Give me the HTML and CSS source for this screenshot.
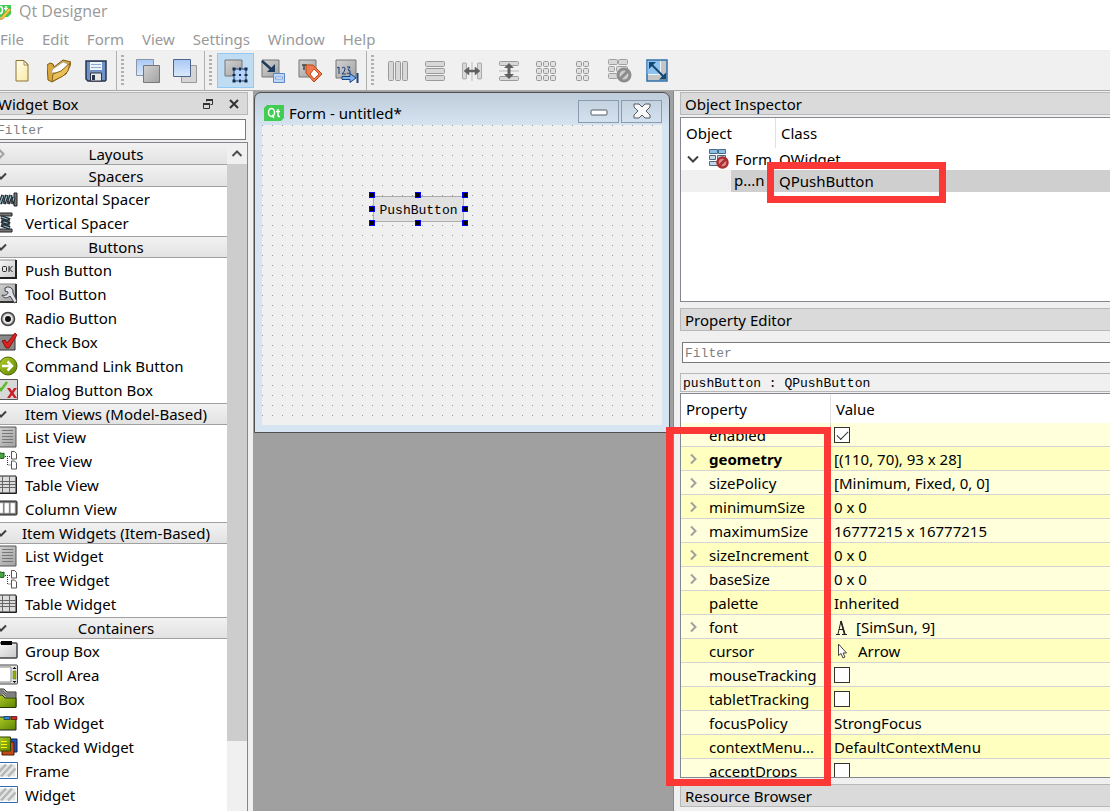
FILE: index.html
```html
<!DOCTYPE html>
<html lang="en">
<head>
<meta charset="utf-8">
<title>Qt Designer</title>
<link rel="stylesheet" href="styles.css">
</head>
<body>
<svg class="defs" aria-hidden="true">
  <defs>
    <linearGradient id="gGray" x1="0" y1="0" x2="1" y2="1"><stop offset="0" stop-color="#d2d2d2"/><stop offset="1" stop-color="#a2a2a2"/></linearGradient>
    <linearGradient id="gLight" x1="0" y1="0" x2="1" y2="1"><stop offset="0" stop-color="#fafafa"/><stop offset="1" stop-color="#c8c8c8"/></linearGradient>
    <linearGradient id="gBlue" x1="0" y1="0" x2="0" y2="1"><stop offset="0" stop-color="#a9c8f5"/><stop offset="1" stop-color="#dbeafc"/></linearGradient>
    <linearGradient id="gPage" x1="0" y1="0" x2="1" y2="1"><stop offset="0" stop-color="#fffef0"/><stop offset="1" stop-color="#fbe9a0"/></linearGradient>
    <linearGradient id="gGreen" x1="0" y1="0" x2="1" y2="1"><stop offset="0" stop-color="#b4cf2a"/><stop offset="1" stop-color="#5d8400"/></linearGradient>
    <symbol id="down" viewBox="0 0 12 12"><path d="M1 3.500 6 8.500 11 3.500" fill="none" stroke="#404040" stroke-width="2"/></symbol>
    <symbol id="right" viewBox="0 0 12 12"><path d="M4 1.500 8.500 6 4 10.500" fill="none" stroke="#a0a0a0" stroke-width="2"/></symbol>
    <symbol id="hspacer" viewBox="0 0 22 22"><path d="M0 5h3v13H0zM18 5h3v13h-3z" fill="#777" stroke="#222"/><path d="M4 16 7 7M8 16l3-9M12 16l3-9M16 16l2-7" stroke="#1c2a34" stroke-width="3.500"/><path d="M4 15.500 7 7.500M8 15.500l3-8M12 15.500l3-8M16 15.500l2-6" stroke="#9fc0d4" stroke-width="1.200"/><path d="M7 7l2 9M11 7l2 9M15 7l2 9" stroke="#333"/></symbol>
    <symbol id="vspacer" viewBox="0 0 22 22"><path d="M2 1h14v3H2zM2 17h14v3H2z" fill="#777" stroke="#222"/><path d="M5 5l9 3M5 9l9 3M5 13l9 3" stroke="#1c2a34" stroke-width="3.500"/><path d="M5.500 5l8 3M5.500 9l8 3M5.500 13l8 3" stroke="#9fc0d4" stroke-width="1.200"/><path d="M14 7l-9 3M14 11l-9 3" stroke="#333"/></symbol>
    <symbol id="pushb" viewBox="0 0 22 22"><path d="M1 1h19v18H1z" fill="url(#gLight)" stroke="#888"/><path d="M20 1v18H1" fill="none" stroke="#222" stroke-width="2"/><rect x="6.500" y="7.500" width="4" height="5" rx="1" fill="none" stroke="#222"/><path d="M13 7v6M16.500 7 13.500 10l3 3" fill="none" stroke="#222"/></symbol>
    <symbol id="toolb" viewBox="0 0 22 22"><path d="M1 1h19v18H1z" fill="url(#gGray)" stroke="#888"/><path d="M20 1v18H1" fill="none" stroke="#333" stroke-width="2"/><path d="M9 5a5 5 0 0 1 8 5l4 8-2.500 2-4.500-7c-3 3-7 2-8-1 3 1 6 0 6-3l-3-1z" fill="#dfe2e8" stroke="#444"/></symbol>
    <symbol id="radio" viewBox="0 0 22 22"><circle cx="12" cy="12" r="6.500" fill="url(#gGray)" stroke="#444" stroke-width="1.500"/><circle cx="12" cy="12" r="4.500" fill="#eee"/><circle cx="12" cy="12" r="3" fill="#111"/></symbol>
    <symbol id="check" viewBox="0 0 22 22"><path d="M2 4h17v15H2z" fill="#8b8b8b" stroke="#333"/><path d="M6 10l3-1 2 3 8-10 2 2-8 13h-3z" fill="#df2020" stroke="#7a0808" stroke-width=".8"/></symbol>
    <symbol id="clink" viewBox="0 0 22 22"><circle cx="12" cy="11" r="9" fill="url(#gGreen)" stroke="#4a6800"/><path d="M6 11h10M11.500 6.500 16 11l-4.500 4.500" fill="none" stroke="#fff" stroke-width="2.500"/></symbol>
    <symbol id="dlgb" viewBox="0 0 22 22"><path d="M0 .500h21.500v20H0z" fill="#d8d8d8" stroke="#555"/><path d="M2 8l3 3 6-8" fill="none" stroke="#5dbb2b" stroke-width="2.500"/><path d="M11 9h3l2 3 2-3h3l-3.500 5 3.500 5h-3l-2-3-2 3h-3l3.500-5z" fill="#c81e28"/></symbol>
    <symbol id="list" viewBox="0 0 22 22"><path d="M1 1h19v20H1z" fill="url(#gGray)" stroke="#555"/><path d="M6 4.500h11M6 7.500h11M6 10.500h11M6 13.500h11M6 16.500h11" stroke="#777"/><path d="M3 3v16" stroke="#888" stroke-width="2"/></symbol>
    <symbol id="tree" viewBox="0 0 22 22"><path d="M0 4c3-4 5 1 8-1v5c-3 2-5-2-8 1z" fill="#49a83f" stroke="#14501a"/><path d="M9 6.500h5M11.500 8v7h4" fill="none" stroke="#333" stroke-dasharray="1 1"/><path d="M15.500 1.500h3l2 2V9h-5zM15.500 11h3l2 2v6h-5z" fill="#fff" stroke="#555"/></symbol>
    <symbol id="table" viewBox="0 0 22 22"><path d="M0 2h20v17H0z" fill="#dcdcdc" stroke="#222"/><path d="M1 7.500h19M1 10.500h19M1 13.500h19M6.500 2v17M13.500 2v17" stroke="#666"/><path d="M20.500 3v16.500H1" fill="none" stroke="#222"/></symbol>
    <symbol id="column" viewBox="0 0 22 22"><rect x="0" y="3" width="21" height="14" rx="1" fill="#777" stroke="#222"/><path d="M2.500 5h4.500v10H2.500zM8.500 5h4.500v10H8.500zM14.500 5h4.500v10h-4.500z" fill="#fff" stroke="#bbb" stroke-width=".5"/></symbol>
    <symbol id="group" viewBox="0 0 22 22"><rect x="0" y="3" width="21" height="15" rx="1" fill="url(#gLight)" stroke="#444" stroke-width="1.500"/><path d="M5 1h11v4H5z" fill="#000"/></symbol>
    <symbol id="scroll" viewBox="0 0 22 22"><rect x="0" y="1" width="21.500" height="19" rx="1" fill="#e8e8e8" stroke="#444"/><path d="M3 3h12v15H3z" fill="#fff" stroke="#888"/><path d="M17 7h3v8h-3z" fill="#91b40a" stroke="#4c6a00" stroke-width=".5"/><path d="M16.500 5l2-2 2 2zM16.500 17l2 2 2-2z"/></symbol>
    <symbol id="toolbox" viewBox="0 0 22 22"><path d="M0 1h8l3 3h9v15H0z" fill="#aaa" stroke="#333"/><path d="M0 5h7l3 3h10M0 3h7l3 3h10" fill="none" stroke="#555"/><path d="M0 7h6l3 3h11v9.500H0z" fill="url(#gGreen)" stroke="#263700"/></symbol>
    <symbol id="tab" viewBox="0 0 22 22"><path d="M0 5h20v13H0z" fill="url(#gGreen)" stroke="#222"/><path d="M8 4.500h6v3H8z" fill="#2e86e0" stroke="#123" stroke-width=".6"/><path d="M15 4.500h6v3h-6z" fill="#d32424" stroke="#311" stroke-width=".6"/></symbol>
    <symbol id="stack" viewBox="0 0 22 22"><path d="M12 3h9v13h-9z" fill="#1d55c5" stroke="#0a1f50"/><path d="M6 6h12v13H6z" fill="#c04a1c" stroke="#501800"/><path d="M1 1h13.500v14H1z" fill="url(#gGreen)" stroke="#304500"/><path d="M5 5.500h6M5 8.500h6M5 11.500h6" stroke="#ff0"/></symbol>
    <symbol id="frame" viewBox="0 0 22 22"><path d="M0 2.500h21.500v16H0z" fill="#fff" stroke="#2d6cb5"/><path d="M0 4.500h19.500v12H0z" fill="#e4e4e4"/><path d="M2 13l8-8.500M5 16.500 16 4.500M12 16.500l7.500-8" stroke="#b4b6b6" stroke-width="2.500"/></symbol>
    <symbol id="bar" viewBox="0 0 6 20"><rect x=".5" y=".5" width="5" height="19" rx="1" fill="#d8d8d8" stroke="#9a9a9a"/></symbol>
    <symbol id="cell" viewBox="0 0 6 6"><rect x=".5" y=".5" width="5" height="5" rx="1" fill="#e2e2e2" stroke="#989898"/></symbol>
  </defs>
</svg>
<div class="app">
  <header class="titlebar">
    <svg class="logo" viewBox="0 0 20 20"><path d="M3 4h16v9l-3 3H0V6z" fill="#41cd52"/><ellipse cx="8" cy="9" rx="2.500" ry="3.500" fill="none" stroke="#fff" stroke-width="1.500"/><path d="M14 5v5M12 7.500h4" stroke="#fff" stroke-width="1.500"/><path d="M9 16 17 7l2 2-8 9-3 .5z" fill="#f5c842" stroke="#a77d28" stroke-width=".6"/></svg>
    <span>Qt Designer</span>
  </header>
  <nav class="menubar">
    <button>File</button><button>Edit</button><button>Form</button><button>View</button><button>Settings</button><button>Window</button><button>Help</button>
  </nav>
  <div class="toolbar">
    <div class="tools first">
      <button aria-label="New"><svg viewBox="0 0 24 24"><path d="M6 1.500h8l4 4V22H6z" fill="url(#gPage)" stroke="#8c7430"/><path d="M14 2v4h4z" fill="#fff" stroke="#8c7430" stroke-width=".8"/></svg></button>
      <button aria-label="Open"><svg viewBox="0 0 24 24"><path d="M0 6l3-2 3 1 1 3 9-7 8 2-1 4-4 8L5 23 1 21z" fill="#d9a93e" stroke="#7d5a14"/><path d="M4 14 6 10 16 3l5 2-5 8z" fill="#fff" stroke="#999" stroke-width=".7"/><path d="M5 22.500 6 15l8-3 9-8-2 8-5 5z" fill="#e9bf5b" stroke="#8c661a"/></svg></button>
      <button aria-label="Save"><svg viewBox="0 0 24 24"><path d="M2 2h20v19l-1 1H4l-2-2z" fill="#6f93c4" stroke="#26364f" stroke-width="1.500"/><path d="M6 3h12v8H6z" fill="#eef3fa"/><path d="M7 5.500h10M7 8.500h10" stroke="#8aaad4"/><path d="M6.500 14h11v8h-11z" fill="#e8e8e8" stroke="#334"/><path d="M8 16h3v5H8z" fill="#27344a"/></svg></button>
    </div>
    <div class="tools">
      <i class="grip"></i>
      <button aria-label="Send to back"><svg viewBox="0 0 24 24"><path d="M.5.500h17v16H.5z" fill="url(#gBlue)" stroke="#8896aa"/><path d="M7.500 6.500h16v17h-16z" fill="url(#gGray)" stroke="#777"/></svg></button>
      <button aria-label="Bring to front"><svg viewBox="0 0 24 24"><path d="M8.500 6.500h15v17h-15z" fill="#d5d5d5" stroke="#999"/><path d="M.5.500h17v17H.5z" fill="url(#gBlue)" stroke="#4f668c"/></svg></button>
    </div>
    <div class="tools">
      <i class="grip"></i>
      <button class="active" aria-label="Edit widgets"><svg viewBox="0 0 24 24"><path d="M1 1h17v16H1z" fill="url(#gGray)" stroke="#777"/><path d="M10 10h12v12H10z" fill="#b5d3fa" stroke="#223a60"/><path d="M8.500 8.500h3v3h-3zM15 8.500h2v3h-2zM20.500 8.500h3v3h-3zM8.500 15h3v2h-3zM20.500 15h3v2h-3zM8.500 20.500h3v3h-3zM15 20.500h2v3h-2zM20.500 20.500h3v3h-3zM15 15h2v2h-2z" fill="#112a50"/></svg></button>
      <button aria-label="Edit signals and slots"><svg viewBox="0 0 24 24"><path d="M1 1h17v17H1z" fill="url(#gGray)" stroke="#777"/><path d="M1 2l9 8" stroke="#1d3b5c" stroke-width="2.500"/><path d="M14 13V5l-8 8z" fill="#1d3b5c"/><path d="M12.500 14.500h11v9h-11z" fill="#bdd8fb" stroke="#5d87c4"/><path d="M14.500 18h7v2h-7z" fill="#fff" stroke="#5d87c4" stroke-width=".7"/></svg></button>
      <button aria-label="Edit buddies"><svg viewBox="0 0 24 24"><path d="M1 1h17v17H1z" fill="url(#gGray)" stroke="#777"/><path d="M4 6h5M6 6v5" stroke="#444" stroke-width="1.500"/><path d="M8 6h7l9 9-8 8-8-9z" fill="#ef7a4d" stroke="#b84617"/><path d="M16 10l5 5-5 5-4-5z" fill="#fff" stroke="#c6501e"/></svg></button>
      <button aria-label="Edit tab order"><svg viewBox="0 0 24 24"><path d="M1 1h20v18H1z" fill="url(#gGray)" stroke="#777"/><path d="M2 9l2-1v7M7 9q3-2 3 1 0 2-3 5h4M12 8h3l-2 3q3 0 2 3-1 1-3 0" fill="none" stroke="#163b78"/><path d="M7 17.500h8v-3l6 4.500-6 4.500v-3H7z" fill="#80b2f2" stroke="#19457e"/><path d="M22.500 14v10" stroke="#19457e" stroke-width="2"/></svg></button>
    </div>
    <div class="tools last">
      <i class="grip"></i>
      <button aria-label="Lay out horizontally"><svg viewBox="0 0 24 24"><use href="#bar" x="2" y="2" width="6" height="20"/><use href="#bar" x="9" y="2" width="6" height="20"/><use href="#bar" x="16" y="2" width="6" height="20"/></svg></button>
      <button aria-label="Lay out vertically"><svg viewBox="0 0 24 24"><g fill="#d8d8d8" stroke="#9a9a9a"><rect x="2.500" y="2.500" width="19" height="5" rx="1"/><rect x="2.500" y="9.500" width="19" height="5" rx="1"/><rect x="2.500" y="16.500" width="19" height="5" rx="1"/></g></svg></button>
      <button aria-label="Horizontal splitter"><svg viewBox="0 0 24 24"><use href="#bar" x="2" y="2" width="5" height="20"/><use href="#bar" x="17" y="2" width="5" height="20"/><path d="M12 3v19" stroke="#bbb"/><path d="M4 12l5-4v3h6V8l5 4-5 4v-3H9v3z" fill="#606060" stroke="#606060" stroke-width=".5"/></svg></button>
      <button aria-label="Vertical splitter"><svg viewBox="0 0 24 24"><g fill="#d8d8d8" stroke="#9a9a9a"><rect x="2.500" y="2.500" width="19" height="4" rx="1"/><rect x="2.500" y="17.500" width="19" height="4" rx="1"/></g><path d="M2 12h20" stroke="#bbb"/><path d="M12 4l5 5h-3.500v6H17l-5 5-5-5h3.500V9H7z" fill="#606060"/></svg></button>
      <button aria-label="Lay out in a grid"><svg viewBox="0 0 24 24"><use href="#cell" x="2" y="2" width="6" height="6"/><use href="#cell" x="9" y="2" width="6" height="6"/><use href="#cell" x="16" y="2" width="6" height="6"/><use href="#cell" x="2" y="9" width="6" height="6"/><use href="#cell" x="9" y="9" width="6" height="6"/><use href="#cell" x="16" y="9" width="6" height="6"/><use href="#cell" x="2" y="16" width="6" height="6"/><use href="#cell" x="9" y="16" width="6" height="6"/><use href="#cell" x="16" y="16" width="6" height="6"/></svg></button>
      <button aria-label="Lay out in a form"><svg viewBox="0 0 24 24"><use href="#cell" x="5" y="2" width="6" height="6"/><use href="#cell" x="12" y="2" width="6" height="6"/><use href="#cell" x="5" y="9" width="6" height="6"/><use href="#cell" x="12" y="9" width="6" height="6"/><use href="#cell" x="5" y="16" width="6" height="6"/><use href="#cell" x="12" y="16" width="6" height="6"/></svg></button>
      <button aria-label="Break layout"><svg viewBox="0 0 24 24"><g fill="#d8d8d8" stroke="#a0a0a0"><rect x=".5" y=".5" width="9" height="5" rx="1"/><rect x="10.500" y=".5" width="9" height="5" rx="1"/><rect x=".5" y="7.500" width="6" height="5" rx="1"/><rect x="8.500" y="7.500" width="11" height="5" rx="1"/><rect x=".5" y="14.500" width="9" height="5" rx="1"/></g><circle cx="16" cy="16" r="6" fill="#ccc" stroke="#8c8c8c" stroke-width="3"/><path d="M12 20l8-8" stroke="#8c8c8c" stroke-width="3"/></svg></button>
      <button aria-label="Adjust size"><svg viewBox="0 0 24 24"><path d="M2 1h20v21H2z" fill="#c6c6c6" stroke="#2f72ad" stroke-width="1.500"/><path d="M2.500 2h13v13h-13z" fill="#8fc2f0"/><path d="M15.500 2v13.500H3" fill="none" stroke="#eef6fd"/><path d="M6 5l13 13" stroke="#114a70" stroke-width="2"/><path d="M4 3h7l-7 7zM21 20.500v-7l-7 7z" fill="#114a70"/></svg></button>
    </div>
  </div>
  <main class="workspace">
    <aside class="widgetbox">
      <div class="dock-title"><h2>Widget Box</h2>
        <button aria-label="Float"><svg viewBox="0 0 12 12"><path d="M4.500 3.500v-2h6v5h-2M1.500 5.500h6v5h-6z" fill="none" stroke="#333"/><path d="M4 2h7M1 6h7" stroke="#333" stroke-width="2"/></svg></button>
        <button aria-label="Close"><svg viewBox="0 0 12 12"><path d="M2 2l8 8M10 2l-8 8" stroke="#333" stroke-width="2"/></svg></button>
      </div>
      <input class="filter" type="text" placeholder="Filter" aria-label="Filter widgets">
      <div class="listframe">
        <div class="categories">
          <section><button class="cat"><svg><use href="#right"/></svg><span>Layouts</span></button></section>
          <section><button class="cat"><svg><use href="#down"/></svg><span>Spacers</span></button>
            <ul><li><svg><use href="#hspacer"/></svg>Horizontal Spacer</li><li><svg><use href="#vspacer"/></svg>Vertical Spacer</li></ul></section>
          <section><button class="cat ruled"><svg><use href="#down"/></svg><span>Buttons</span></button>
            <ul><li><svg><use href="#pushb"/></svg>Push Button</li><li><svg><use href="#toolb"/></svg>Tool Button</li><li><svg><use href="#radio"/></svg>Radio Button</li><li><svg><use href="#check"/></svg>Check Box</li><li><svg><use href="#clink"/></svg>Command Link Button</li><li><svg><use href="#dlgb"/></svg>Dialog Button Box</li></ul></section>
          <section><button class="cat ruled"><svg><use href="#down"/></svg><span>Item Views (Model-Based)</span></button>
            <ul><li><svg><use href="#list"/></svg>List View</li><li><svg><use href="#tree"/></svg>Tree View</li><li><svg><use href="#table"/></svg>Table View</li><li><svg><use href="#column"/></svg>Column View</li></ul></section>
          <section><button class="cat ruled"><svg><use href="#down"/></svg><span>Item Widgets (Item-Based)</span></button>
            <ul><li><svg><use href="#list"/></svg>List Widget</li><li><svg><use href="#tree"/></svg>Tree Widget</li><li><svg><use href="#table"/></svg>Table Widget</li></ul></section>
          <section><button class="cat ruled"><svg><use href="#down"/></svg><span>Containers</span></button>
            <ul><li><svg><use href="#group"/></svg>Group Box</li><li><svg><use href="#scroll"/></svg>Scroll Area</li><li><svg><use href="#toolbox"/></svg>Tool Box</li><li><svg><use href="#tab"/></svg>Tab Widget</li><li><svg><use href="#stack"/></svg>Stacked Widget</li><li><svg><use href="#frame"/></svg>Frame</li><li><svg><use href="#frame"/></svg>Widget</li></ul></section>
        </div>
        <div class="scrollbar"><button aria-label="Scroll up"><svg viewBox="0 0 12 12"><path d="M1.500 8 6 3.500 10.500 8" fill="none" stroke="#505050" stroke-width="2"/></svg></button><div class="thumb"></div></div>
      </div>
    </aside>
    <section class="mdi">
      <div class="subwindow">
        <div class="subtitle">
          <svg class="qt" viewBox="0 0 20 16"><path d="M3 0h17v13l-3 3H0V3z" fill="#41cd52"/><ellipse cx="7.500" cy="7.500" rx="3" ry="4" fill="none" stroke="#fff" stroke-width="1.500"/><path d="M8 10l2 3M14 4v6q0 2 2 1.500M12 6.500h4" fill="none" stroke="#fff" stroke-width="1.500"/></svg>
          <span>Form - untitled*</span>
          <button aria-label="Minimize"><svg viewBox="0 0 18 18"><rect x="1" y="8" width="16" height="5" rx="1" fill="#fff" stroke="#555b66"/></svg></button>
          <button aria-label="Close form"><svg viewBox="0 0 18 18"><path d="M1 2h5l3 3 3-3h5v3l-4 4 4 4v3h-5l-3-3-3 3H1v-3l4-4-4-4z" fill="#f8f8f8" stroke="#555b66"/></svg></button>
        </div>
        <div class="canvas">
          <div class="selected">
            <button>PushButton</button>
            <i class="h tl"></i><i class="h tc"></i><i class="h tr"></i><i class="h ml"></i><i class="h mr"></i><i class="h bl"></i><i class="h bc"></i><i class="h br"></i>
          </div>
        </div>
      </div>
    </section>
    <aside class="docks">
      <section class="inspector">
        <div class="dock-title"><h2>Object Inspector</h2></div>
        <div class="treeframe">
          <table class="objects">
            <colgroup><col class="c-object"><col></colgroup>
            <thead><tr><th>Object</th><th>Class</th></tr></thead>
            <tbody>
              <tr><td><div class="node"><svg class="chev"><use href="#down"/></svg><svg class="formicon" viewBox="0 0 20 20"><g fill="#8cbfe6" stroke="#4a6a8a"><path d="M.5.500h8v4h-8zM9.500.500h7v4h-7z"/><path d="M.5 6.500h6v4h-6zM8.500 6.500h8v4h-8zM.5 12.500h8v4h-8z" fill="#c9d6e2"/></g><circle cx="13.500" cy="13.500" r="5" fill="#d98c8c" stroke="#ad2f2f" stroke-width="2.500"/><path d="M10 17l7-7" stroke="#ad2f2f" stroke-width="2.500"/></svg>Form</div></td><td>QWidget</td></tr>
              <tr class="current"><td><div class="child">p...n</div></td><td>QPushButton</td></tr>
            </tbody>
          </table>
        </div>
        <div class="mark mark-class"></div>
      </section>
      <section class="editor">
        <div class="dock-title"><h2>Property Editor</h2></div>
        <input class="filter" type="text" placeholder="Filter" aria-label="Filter properties">
        <div class="objname">pushButton : QPushButton</div>
        <div class="propframe">
          <table class="props">
            <colgroup><col class="c-prop"><col></colgroup>
            <thead><tr><th>Property</th><th>Value</th></tr></thead>
            <tbody>
              <tr><td><div class="name"><i></i><label for="enabled">enabled</label></div></td><td><input id="enabled" type="checkbox" checked></td></tr>
              <tr><td><div class="name"><svg><use href="#right"/></svg><b>geometry</b></div></td><td>[(110, 70), 93 x 28]</td></tr>
              <tr><td><div class="name"><svg><use href="#right"/></svg>sizePolicy</div></td><td>[Minimum, Fixed, 0, 0]</td></tr>
              <tr><td><div class="name"><svg><use href="#right"/></svg>minimumSize</div></td><td>0 x 0</td></tr>
              <tr><td><div class="name"><svg><use href="#right"/></svg>maximumSize</div></td><td>16777215 x 16777215</td></tr>
              <tr><td><div class="name"><svg><use href="#right"/></svg>sizeIncrement</div></td><td>0 x 0</td></tr>
              <tr><td><div class="name"><svg><use href="#right"/></svg>baseSize</div></td><td>0 x 0</td></tr>
              <tr><td><div class="name"><i></i>palette</div></td><td>Inherited</td></tr>
              <tr><td><div class="name"><svg><use href="#right"/></svg>font</div></td><td><div class="val"><svg viewBox="0 0 14 18"><path d="M2 16.500h4M8 16.500h5M4 16 7 3l4 13M5 11.500h4" fill="none" stroke="#222"/><path d="M7 3l3.500 13" stroke="#222" stroke-width="1.500"/></svg>[SimSun, 9]</div></td></tr>
              <tr><td><div class="name"><i></i>cursor</div></td><td><div class="val wide"><svg viewBox="0 0 14 18"><path d="M4.500 2v11.500l2.500-2L9 16l2-1-2-4h3.500z" fill="#fff" stroke="#444"/></svg>Arrow</div></td></tr>
              <tr><td><div class="name"><i></i><label for="mouse">mouseTracking</label></div></td><td><input id="mouse" type="checkbox"></td></tr>
              <tr><td><div class="name"><i></i><label for="tablet">tabletTracking</label></div></td><td><input id="tablet" type="checkbox"></td></tr>
              <tr><td><div class="name"><i></i>focusPolicy</div></td><td>StrongFocus</td></tr>
              <tr><td><div class="name"><i></i>contextMenu...</div></td><td>DefaultContextMenu</td></tr>
              <tr><td><div class="name"><i></i><label for="drops">acceptDrops</label></div></td><td><input id="drops" type="checkbox"></td></tr>
            </tbody>
          </table>
        </div>
        <div class="mark mark-props"></div>
      </section>
      <div class="dock-title"><h2>Resource Browser</h2></div>
    </aside>
  </main>
</div>
</body>
</html>
```
FILE: styles.css
```css
* { box-sizing: border-box; }
body { margin: 0; overflow: hidden; background: #fff; color: #000; font: 15px/20px "Noto Sans", "Open Sans", sans-serif; }
button { margin: 0; padding: 0; border: 0; background: none; font: inherit; color: inherit; }
h2 { margin: 0; font: inherit; }
ul { margin: 0; padding: 0; list-style: none; }
svg { display: block; flex: none; }
.defs { position: absolute; width: 0; height: 0; }

/* The window runs 16px past the left edge of the screen. */
.app { display: flex; flex-direction: column; height: 100vh; margin-left: -16px; }

.titlebar { display: flex; align-items: center; gap: 7px; height: 21px; padding-left: 8px; color: #999; }
.logo { width: 20px; height: 20px; }
.menubar { display: flex; align-items: center; gap: 16px; height: 30px; padding: 6px 0 0 16px; border-bottom: 1px solid #ececec; color: #999; }
.titlebar, .menubar { font-family: "Open Sans", "Noto Sans", sans-serif; }
.titlebar { font-size: 16px; }
.menubar { gap: 18px; font-size: 15px; font-family: "Noto Sans", "Open Sans", sans-serif; }

.toolbar { display: flex; height: 40px; background: #f0f0f0; border-bottom: 1px solid #a8a8a8; }
.tools { display: flex; align-items: center; padding: 0 1px 0 4px; border-right: 1px solid #b0b0b0; }
.tools.first { padding: 0 2px 0 19px; }
.tools.last { border-right: 0; }
.tools button { display: grid; place-items: center; width: 37px; height: 35px; }
.tools button.active { background: #c0dcf3; border: 1px solid #90c8f6; }
.tools svg { width: 24px; height: 24px; }
.grip { width: 3px; height: 32px; margin-right: 5px; background: repeating-linear-gradient(#b0b0b0 0 2px, #f0f0f0 2px 4px); }

.workspace { display: flex; flex: 1; min-height: 0; background: #f0f0f0; }

.dock-title { display: flex; flex: none; align-items: center; gap: 14px; height: 23px; padding: 0 7px 0 4px; border: 1px solid #b8b8b8; background: #dadada; }
.dock-title h2 { flex: 1; }
.dock-title svg { width: 12px; height: 12px; }
.filter { flex: none; height: 21px; padding: 1px 2px 0; border: 1px solid #7a7a7a; border-radius: 0; background: #fff; font: 13px/18px "Liberation Mono", monospace; }
.filter::placeholder { color: #808080; opacity: 1; }

.widgetbox { display: flex; flex-direction: column; width: 264px; padding-top: 1px; flex: none; }
.widgetbox .dock-title { padding-left: 13px; }
.widgetbox .filter { margin: 4px 2px 2px 0; padding-left: 12px; }
.listframe { display: flex; flex: 1; min-height: 0; border: 1px solid #828790; border-bottom: 0; background: #fff; }
.categories { flex: 1; overflow: hidden; }
.cat { display: flex; align-items: center; width: 100%; height: 22px; padding: 0 2px 0 10px; border-bottom: 1px solid #a0a0a0; background: linear-gradient(#f2f2f2, #e2e2e2); }
.cat.ruled { margin-top: 1px; border-top: 1px solid #a0a0a0; }
.cat svg { width: 12px; height: 12px; }
.cat span { flex: 1; }
.categories li { display: flex; align-items: center; gap: 7px; height: 24px; padding-left: 11px; }
.categories li svg { width: 22px; height: 22px; }
.scrollbar { width: 20px; background: #f0f0f0; }
.scrollbar button { display: grid; place-items: center; width: 100%; height: 21px; }
.scrollbar svg { width: 12px; height: 12px; }
.thumb { height: 577px; background: #cdcdcd; }

.mdi { flex: 1; min-width: 0; margin-left: 5px; padding: 1px 0 0 1px; border-right: 1px solid #828790; background: #a0a0a0; }
.subwindow { width: 416px; padding: 0 7px 7px; border: 1px solid #505050; border-radius: 7px 7px 0 0; background: linear-gradient(#bfcddb, #d7e4f2 34px); }
.subtitle { display: flex; align-items: center; gap: 5px; height: 32px; padding-top: 4px; }
.subtitle span { flex: 1; padding-top: 4px; }
.subtitle .qt { width: 20px; height: 16px; margin: 4px 0 0 2px; }
.subtitle button { display: grid; place-items: center; width: 41px; height: 23px; border: 1px solid #8a9bb0; margin-right: -3px; }
.subtitle button + button { margin-right: 0; }
.subtitle button svg { width: 18px; height: 18px; }
.canvas { position: relative; height: 300px; background: repeating-linear-gradient(#0000 0 1px, #f0f0f0 1px 10px), repeating-linear-gradient(90deg, #969696 0 1px, #f0f0f0 1px 10px); }
.selected { position: absolute; left: 110px; top: 70px; width: 93px; height: 28px; }
.selected button { display: block; width: 91px; height: 26px; margin: 1px; padding-top: 3px; border: 1px solid #adadad; background: #e1e1e1; font: 13px/20px "Liberation Mono", monospace; }
.h { position: absolute; width: 6px; height: 6px; border: 1px solid #00f; background: #000; }
.tl, .tc, .tr { top: -3px; }
.ml, .mr { top: 11px; }
.bl, .bc, .br { bottom: -3px; }
.tl, .ml, .bl { left: -3px; }
.tc, .bc { left: 43px; }
.tr, .mr, .br { right: -3px; }

.docks { display: flex; flex-direction: column; flex: none; width: 436px; padding: 1px 0 4px 6px; }
.docks .dock-title { border-right: 0; }
.inspector { position: relative; flex: none; }
.treeframe { height: 185px; margin-top: 2px; border: 1px solid #828790; border-right: 0; background: #fff; }
table { width: 100%; border-spacing: 0; table-layout: fixed; }
th { height: 30px; padding: 0 5px; text-align: left; font-weight: 400; }
th + th { border-left: 1px solid #e0e0e0; }
td { padding: 0; white-space: nowrap; }
.c-object { width: 94px; }
.objects td { height: 22px; overflow: hidden; }
.objects td + td { padding-left: 4px; }
.node { display: flex; align-items: center; height: 22px; padding-left: 6px; }
.node .chev { width: 12px; height: 12px; margin-right: 10px; }
.formicon { width: 20px; height: 20px; margin-right: 6px; }
.current { background: #cfcfcf; }
.child { height: 22px; padding-left: 3px; border-left: 50px solid #f0f0f0; }
.mark { position: absolute; border: 7px solid #fc3837; pointer-events: none; }
.mark-class { left: 87px; top: 70px; width: 179px; height: 41px; }

.editor { position: relative; display: flex; flex-direction: column; flex: 1; min-height: 0; margin: 6px 0; }
.editor .filter { margin: 11px 0 10px 2px; border-right: 0; }
.objname { height: 19px; margin-bottom: 1px; padding: 1px 0 0 2px; border: 1px solid #b8b8b8; border-right: 0; font: 13px/18px "Liberation Mono", monospace; }
.propframe { flex: 1; min-height: 0; overflow: hidden; border: 1px solid #828790; border-right: 0; background: #fff; }
.c-prop { width: 149px; }
.props th { height: 29px; }
.props td { height: 24px; border-bottom: 1px solid #d4d4d4; }
.props td + td { padding-left: 3px; border-left: 1px solid #d4d4d4; }
.props tr:nth-child(odd) td { background: #ffffdc; }
.props tr:nth-child(even) td { background: #ffffbf; }
.name { display: flex; align-items: center; height: 23px; padding-left: 6px; }
.name svg, .name i { width: 12px; height: 12px; margin-right: 10px; }
.val { display: flex; align-items: center; gap: 8px; }
.val.wide { gap: 10px; }
.val svg { width: 14px; height: 18px; }
.props input { display: block; appearance: none; width: 16px; height: 16px; margin: 0; border: 1px solid #333; background: #fff; }
.props input:checked::before { content: ""; display: block; width: 10px; height: 5px; margin: 3px 2px; border: solid #333; border-width: 0 0 1px 1px; transform: rotate(-45deg); }
.mark-props { left: -14px; top: 119px; right: 279px; bottom: -8px; }
```
